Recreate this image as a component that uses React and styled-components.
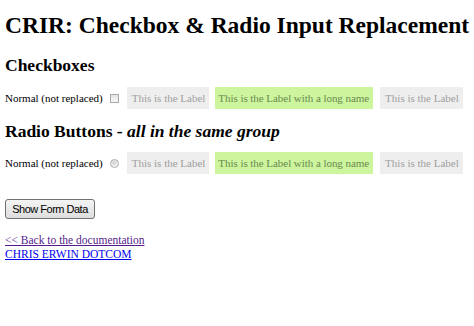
import styled, { createGlobalStyle } from "styled-components";

const GlobalStyle = createGlobalStyle`
  html, body {
    margin: 0;
    padding: 0;
    background: #ffffff;
  }
  body {
    font-family: "Liberation Serif", "Times New Roman", serif;
    color: #000;
  }
`;

const Page = styled.div`
  display: flex;
  flex-direction: column;
  align-items: flex-start;
  padding: 11px 5px 0 5px;
`;

const Title = styled.h1`
  margin: 0;
  font-size: 23.5px;
  line-height: 28px;
  font-weight: bold;
  white-space: nowrap;
`;

const Heading = styled.h2`
  margin: ${(p) => p.$top}px 0 0 0;
  font-size: 17.5px;
  line-height: 20px;
  font-weight: bold;
  white-space: nowrap;

  em {
    font-style: italic;
  }
`;

const Row = styled.div`
  display: flex;
  align-items: center;
  margin-top: ${(p) => p.$top}px;
  font-size: 11px;
  line-height: 12px;
  white-space: nowrap;

  > * {
    flex-shrink: 0;
  }
`;

const Normal = styled.span`
  margin-right: 7px;
`;

const Check = styled.span`
  display: inline-block;
  box-sizing: border-box;
  width: 9px;
  height: 9px;
  margin-right: 8px;
  border: 1px solid #a9a9a9;
  background: linear-gradient(#e4e4e4, #f6f6f6);
  border-radius: ${(p) => (p.$round ? "50%" : "0")};
  position: relative;

  ${(p) =>
    p.$round &&
    `
    &::after {
      content: "";
      position: absolute;
      left: 1.5px;
      top: 1.5px;
      width: 4px;
      height: 4px;
      border-radius: 50%;
      background: #d6d6d6;
    }
  `}
`;

const Label = styled.span`
  display: inline-block;
  padding: 5px ${(p) => (p.$on ? "4px 5px 3px" : "4px 5px 5px")};
  margin-right: ${(p) => (p.$on ? "7px" : "6px")};
  background: ${(p) => (p.$on ? "#ccf59e" : "#eeeeee")};
  color: ${(p) => (p.$on ? "#6b8a4e" : "#a0a0a0")};
  letter-spacing: ${(p) => (p.$on ? "-0.05px" : "0")};
`;

const Button = styled.button`
  margin-top: 25px;
  width: 90px;
  height: 20px;
  padding: 0;
  font-family: "Liberation Sans", Arial, sans-serif;
  font-size: 11px;
  letter-spacing: -0.5px;
  color: #000;
  background: linear-gradient(#f4f4f4, #dedede);
  border: 1px solid #707070;
  border-radius: 3px;
`;

const Links = styled.div`
  margin-top: 14px;
  display: flex;
  flex-direction: column;
  font-size: 11.5px;
  line-height: 14px;
`;

const Link = styled.a`
  color: ${(p) => (p.$visited ? "#551a8b" : "#0000ee")};
  text-decoration: underline;
`;

const Options = ({ round }) => (
  <>
    <Normal>Normal (not replaced)</Normal>
    <Check $round={round} />
    <Label>This is the Label</Label>
    <Label $on>This is the Label with a long name</Label>
    <Label>This is the Label</Label>
  </>
);

const App = () => (
  <>
    <GlobalStyle />
    <Page>
      <Title>CRIR: Checkbox &amp; Radio Input Replacement</Title>
      <Heading $top={16}>Checkboxes</Heading>
      <Row $top={12}>
        <Options />
      </Row>
      <Heading $top={12}>
        Radio Buttons - <em>all in the same group</em>
      </Heading>
      <Row $top={11}>
        <Options round />
      </Row>
      <Button>Show Form Data</Button>
      <Links>
        <Link $visited href="#">&lt;&lt; Back to the documentation</Link>
        <Link href="#">CHRIS ERWIN DOTCOM</Link>
      </Links>
    </Page>
  </>
);

export default App;
